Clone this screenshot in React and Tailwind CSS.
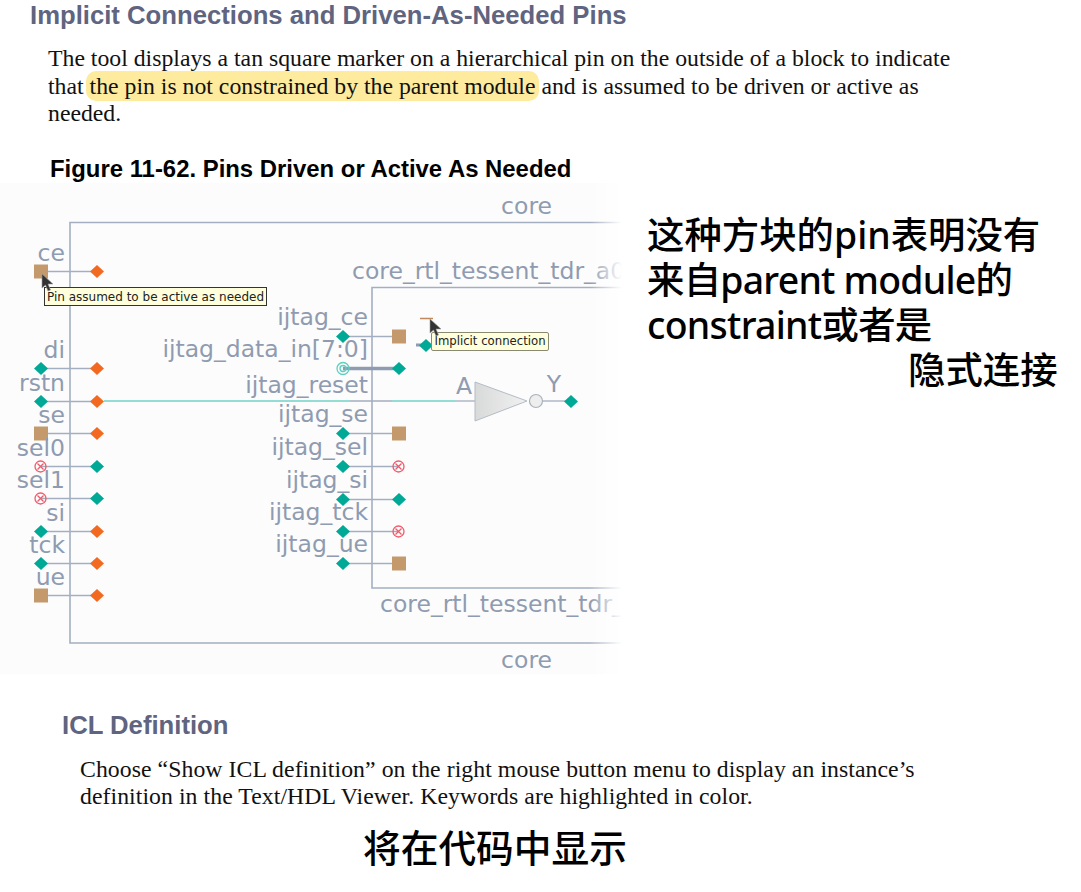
const outerPins = [
  { name: 'ce', y: 271, left: 'tan', right: 'orange' },
  { name: 'di', y: 368, left: 'teal', right: 'orange' },
  { name: 'rstn', y: 401, left: 'teal', right: 'orange' },
  { name: 'se', y: 433, left: 'tan', right: 'orange' },
  { name: 'sel0', y: 466, left: 'red', right: 'teal' },
  { name: 'sel1', y: 498, left: 'red', right: 'teal' },
  { name: 'si', y: 531, left: 'teal', right: 'orange' },
  { name: 'tck', y: 563, left: 'teal', right: 'orange' },
  { name: 'ue', y: 595, left: 'tan', right: 'orange' },
];

const innerPins = [
  { name: 'ijtag_ce', y: 336, left: 'teal', right: 'tan' },
  { name: 'ijtag_data_in[7:0]', y: 368, left: 'ring', right: 'teal', bus: true },
  { name: 'ijtag_reset', y: 401 },
  { name: 'ijtag_se', y: 433, left: 'teal', right: 'tan' },
  { name: 'ijtag_sel', y: 466, left: 'teal', right: 'red' },
  { name: 'ijtag_si', y: 499, left: 'teal', right: 'teal' },
  { name: 'ijtag_tck', y: 531, left: 'teal', right: 'red' },
  { name: 'ijtag_ue', y: 563, left: 'teal', right: 'tan' },
];

const TOP = 183;

const Marker = ({ type, x, y }) => {
  if (type === 'tan') return <rect x={x - 7} y={y - 6.5} width="14" height="14" fill="#c49a6c" />;
  if (type === 'teal') return <polygon points={`${x - 7},${y + 0.5} ${x},${y - 6} ${x + 7},${y + 0.5} ${x},${y + 7}`} fill="#00a896" />;
  if (type === 'orange') return <polygon points={`${x - 7},${y + 0.5} ${x},${y - 6} ${x + 7},${y + 0.5} ${x},${y + 7}`} fill="#f26a21" />;
  if (type === 'ring') {
    return (
      <g fill="none" stroke="#5fcfc0">
        <circle cx={x} cy={y + 0.5} r="6" strokeWidth="1.3" />
        <circle cx={x} cy={y + 0.5} r="3" strokeWidth="1.3" />
      </g>
    );
  }
  return (
    <g fill="none" stroke="#f2596b" strokeWidth="1.3">
      <circle cx={x - 0.5} cy={y + 0.5} r="5.5" />
      <path d={`M${x - 3.5} ${y - 2.5}L${x + 2.5} ${y + 3.5}M${x + 2.5} ${y - 2.5}L${x - 3.5} ${y + 3.5}`} />
    </g>
  );
};

const Cursor = ({ x, y }) => (
  <path
    d={`M${x} ${y}v14l3.5-3 2.5 6 2.5-1-2.5-6h5z`}
    fill="#333"
    stroke="#999"
    strokeWidth="0.6"
  />
);

const Label = ({ children, right, y }) => (
  <span
    className="absolute font-['DejaVu_Sans',sans-serif] text-[23.5px] leading-[28px] whitespace-nowrap text-[#8f9bb0]"
    style={{ right: 622 - right, top: y - TOP - 14 }}
  >
    {children}
  </span>
);

const Diagram = () => (
  <div className="relative w-[622px] h-[491px] shrink-0 overflow-hidden bg-[#fcfcfc]">
    <svg className="absolute inset-0 blur-[0.4px]" width="622" height="491" viewBox={`0 ${TOP} 622 491`}>
      {/* block outlines */}
      <path d="M622 222.5H70V643H622" fill="none" stroke="#a3aec0" strokeWidth="1.6" />
      <path d="M622 287.5H372V588H622" fill="none" stroke="#a3aec0" strokeWidth="1.6" />

      {outerPins.map((pin) => (
        <g key={pin.name}>
          <line x1="41" x2="97" y1={pin.y + 0.5} y2={pin.y + 0.5} stroke="#a3aec0" strokeWidth="1.3" />
          <Marker type={pin.left} x={41} y={pin.y} />
          <Marker type={pin.right} x={97} y={pin.y} />
        </g>
      ))}

      {innerPins.filter((pin) => pin.left).map((pin) => (
        <g key={pin.name}>
          <line
            x1="343"
            x2="399"
            y1={pin.y + 0.5}
            y2={pin.y + 0.5}
            stroke={pin.bus ? '#8f9bb0' : '#a3aec0'}
            strokeWidth={pin.bus ? 3.5 : 1.3}
          />
          <Marker type={pin.left} x={343} y={pin.y} />
          <Marker type={pin.right} x={399} y={pin.y} />
        </g>
      ))}

      {/* rstn net through to the inverter */}
      <line x1="104" x2="350" y1="401" y2="401" stroke="#72d3c8" strokeWidth="1.6" />
      <line x1="350" x2="392" y1="401" y2="401" stroke="#a3aec0" strokeWidth="1.3" />
      <line x1="392" x2="455" y1="401" y2="401" stroke="#72d3c8" strokeWidth="1.6" />
      <line x1="455" x2="475" y1="401" y2="401" stroke="#a3aec0" strokeWidth="1.3" />
      <defs>
        <linearGradient id="gate" x1="0" x2="1" y1="0" y2="0">
          <stop offset="0" stopColor="#d8dad9" />
          <stop offset="1" stopColor="#f0f1f0" />
        </linearGradient>
      </defs>
      <polygon points="475,382 527,401 475,421" fill="url(#gate)" stroke="#b4bcc6" strokeWidth="1" />
      <circle cx="536" cy="401" r="6.5" fill="#eeeeee" stroke="#aab2bd" strokeWidth="1.2" />
      <line x1="543" x2="571" y1="401" y2="401" stroke="#a3aec0" strokeWidth="1.3" />
      <Marker type="teal" x={571} y={401} />

      {/* implicit connection stub */}
      <line x1="420" x2="433" y1="318.5" y2="318.5" stroke="#c28a5c" strokeWidth="1.5" />
      <line x1="416" x2="424" y1="345" y2="345" stroke="#8f9bb0" strokeWidth="3" />
      <Marker type="teal" x={426} y={345} />
    </svg>

    {outerPins.map((pin) => (
      <Label key={pin.name} right={65} y={pin.y - 18}>{pin.name}</Label>
    ))}
    {innerPins.map((pin) => (
      <Label key={pin.name} right={368} y={pin.name === 'ijtag_reset' ? 385 : pin.y - 19}>{pin.name}</Label>
    ))}
    <Label right={552} y={206}>core</Label>
    <Label right={552} y={660}>core</Label>
    <span className="absolute left-[352px] top-[74px] font-['DejaVu_Sans',sans-serif] text-[23.5px] leading-[28px] whitespace-nowrap text-[#8f9bb0]">core_rtl_tessent_tdr_a0</span>
    <span className="absolute left-[380px] top-[407px] font-['DejaVu_Sans',sans-serif] text-[23.5px] leading-[28px] whitespace-nowrap text-[#8f9bb0]">core_rtl_tessent_tdr_</span>
    <Label right={472} y={386}>A</Label>
    <Label right={561} y={384}>Y</Label>

    {/* right edge fades out */}
    <div className="absolute right-0 top-0 bottom-0 w-[32px] bg-gradient-to-r from-transparent to-white" />

    <div className="absolute left-[44px] top-[104px] h-[19px] w-[223px] flex items-center justify-center border border-[#333333] bg-[#ffffdc] font-['DejaVu_Sans',sans-serif] text-[12px] whitespace-nowrap text-[#222222]">
      Pin assumed to be active as needed
    </div>
    <div className="absolute left-[431px] top-[149px] h-[19px] w-[118px] flex items-center justify-center rounded-[2px] border border-[#8a8a70] bg-[#ffffdc] font-['DejaVu_Sans',sans-serif] text-[11.7px] whitespace-nowrap text-[#222222]">
      Implicit connection
    </div>
    <svg className="absolute inset-0 blur-[0.4px]" width="622" height="491" viewBox={`0 ${TOP} 622 491`}>
      <Cursor x={42} y={274} />
      <Cursor x={430} y={319} />
    </svg>
  </div>
);

const CjkLine = ({ children, className = '' }) => (
  <p className={`h-[45px] leading-[45px] whitespace-nowrap ${className}`}>{children}</p>
);

export default function App() {
  return (
    <div className="w-[1081px] h-[892px] overflow-hidden bg-white">
      <h2 className="pl-[30px] h-[30px] font-['Liberation_Sans',sans-serif] font-bold text-[25.7px] leading-[30px] whitespace-nowrap text-[#5f6480]">
        Implicit Connections and Driven-As-Needed Pins
      </h2>
      <p className="mt-[15px] pl-[48px] w-[1000px] font-['Liberation_Serif',serif] text-[23.76px] leading-[27.5px] text-[#111111]">
        The tool displays a tan square marker on a hierarchical pin on the outside of a block to indicate
        <br />
        that <span className="-mx-[4px] px-[4px] py-[2px] rounded-[10px] bg-[#feeb9e]">the pin is not constrained by the parent module</span> and is assumed to be driven or active as
        <br />
        needed.
      </p>
      <h3 className="mt-[26.5px] pl-[50px] h-[29px] font-['Liberation_Sans',sans-serif] font-bold text-[23.9px] leading-[30px] whitespace-nowrap text-black">
        Figure 11-62. Pins Driven or Active As Needed
      </h3>

      <div className="flex">
        <Diagram />
        <div className="pl-[25px] pt-[29px] font-['Noto_Sans','Noto_Sans_CJK_SC',sans-serif] font-medium text-[37.4px] text-black">
          <CjkLine>这种方块的pin表明没有</CjkLine>
          <CjkLine className="tracking-[-0.75px]">来自parent module的</CjkLine>
          <CjkLine className="tracking-[-0.7px]">constraint或者是</CjkLine>
          <CjkLine className="pl-[261px]">隐式连接</CjkLine>
        </div>
      </div>

      <h2 className="mt-[36px] pl-[62px] h-[30px] font-['Liberation_Sans',sans-serif] font-bold text-[25.7px] leading-[30px] whitespace-nowrap text-[#5f6480]">
        ICL Definition
      </h2>
      <p className="mt-[15.5px] pl-[80px] font-['Liberation_Serif',serif] text-[23.76px] leading-[27px] tracking-[0.06px] whitespace-nowrap text-[#111111]">
        Choose “Show ICL definition” on the right mouse button menu to display an instance’s
        <br />
        definition in the Text/HDL Viewer. Keywords are highlighted in color.
      </p>
      <p className="mt-[11.5px] pl-[363px] h-[50px] font-['Noto_Sans_CJK_SC',sans-serif] font-medium text-[37.7px] leading-[50px] whitespace-nowrap text-black">
        将在代码中显示
      </p>
    </div>
  );
}
